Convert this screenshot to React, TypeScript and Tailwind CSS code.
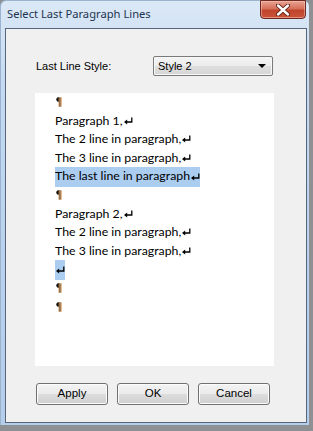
import React from "react";

const Pilcrow = () => (
  <svg width="6" height="10" viewBox="0 0 6 10" className="block">
    <path d="M0.3 2.4 C0.3 0.9 1.4 0.3 3 0.3 L3 4.7 C1.4 4.7 0.3 3.9 0.3 2.4 Z" fill="#111" />
    <rect x="2.6" y="0.3" width="1" height="9.4" fill="#c8781e" />
    <rect x="3.6" y="0.3" width="0.9" height="9.4" fill="#1a1a2a" />
    <rect x="4.5" y="0.3" width="1" height="9.4" fill="#c8781e" />
  </svg>
);

const Ret = () => (
  <svg width="9" height="8" viewBox="0 0 9 8" className="inline-block ml-[1px]">
    <path d="M7.8 0.5 V5 H2.5" stroke="#000" strokeWidth="1.3" fill="none" />
    <polygon points="0,5 3.2,2.4 3.2,7.6" fill="#000" />
  </svg>
);

type Line = { text?: string; ret?: boolean; pil?: boolean; hl?: boolean };

const lines: Line[] = [
  { pil: true },
  { text: "Paragraph 1,", ret: true },
  { text: "The 2 line in paragraph,", ret: true },
  { text: "The 3 line in paragraph,", ret: true },
  { text: "The last line in paragraph", ret: true, hl: true },
  { pil: true },
  { text: "Paragraph 2,", ret: true },
  { text: "The 2 line in paragraph,", ret: true },
  { text: "The 3 line in paragraph,", ret: true },
  { ret: true, hl: true },
  { pil: true },
  { pil: true },
];

const Btn = ({ label }: { label: string }) => (
  <div className="w-[72px] h-[22px] rounded-[3px] border border-[#707070] flex items-center justify-center text-[11.5px] text-black bg-[linear-gradient(to_bottom,#f3f3f3_0%,#ebebeb_48%,#dddddd_52%,#cfcfcf_100%)] shadow-[inset_0_0_0_1px_#fcfcfc]">
    {label}
  </div>
);

export default function App() {
  return (
    <div className="w-[313px] h-[431px] bg-[#8e9093] flex flex-col" style={{ fontFamily: '"Liberation Sans", Arial, sans-serif' }}>
      <div className="flex">
        <div className="w-[309px] h-[425px] flex flex-col rounded-t-[6px] bg-[linear-gradient(to_bottom,#dbe8f6_0%,#c4daf2_20%,#b9d1ee_60%,#b3cdea_100%)] border-l border-t border-[#9bb3cf]">
          <div className="h-[27px] flex items-start justify-between">
            <div
              className="pl-[6px] pt-[5px] text-[11.2px] text-[#1e3450]"
              style={{ fontFamily: '"Noto Sans", sans-serif' }}
            >
              Select Last Paragraph Lines
            </div>
            <div className="mr-[3px] -mt-[1px] w-[46px] h-[19px] rounded-b-[4px] border border-[#6a2a20] flex items-center justify-center bg-[linear-gradient(to_bottom,#e8a493_0%,#d5705a_45%,#c0432b_55%,#c9553a_100%)] shadow-[inset_0_0_0_1px_rgba(255,200,190,0.5)]">
              <svg width="14" height="12" viewBox="0 0 14 12">
                <path d="M2 1.5 L12 10.5 M12 1.5 L2 10.5" stroke="#5a1a10" strokeWidth="4.2" strokeLinecap="round" />
                <path d="M2 1.5 L12 10.5 M12 1.5 L2 10.5" stroke="#ffffff" strokeWidth="2.4" strokeLinecap="round" />
              </svg>
            </div>
          </div>
          <div className="ml-[4px] mr-[2px] h-[395px] border border-[#56657a] bg-[#f0f0f0] flex flex-col">
            <div className="h-[27px]" />
            <div className="flex items-center h-[20px]">
              <div className="ml-[30px] w-[117px] text-[11px] text-black">Last Line Style:</div>
              <div className="w-[120px] h-[20px] rounded-[2px] border border-[#7a7a7a] flex items-center justify-between bg-[linear-gradient(to_bottom,#f4f4f4_0%,#ececec_50%,#dedede_52%,#d6d6d6_100%)] shadow-[inset_0_0_0_1px_#f8f8f8]">
                <span className="pl-[4px] text-[11px] text-black">Style 2</span>
                <svg width="8" height="4" viewBox="0 0 8 4" className="mr-[6px]">
                  <polygon points="0,0 8,0 4,4" fill="#000" />
                </svg>
              </div>
            </div>
            <div className="h-[17px]" />
            <div
              className="ml-[29px] w-[239px] h-[273px] bg-white pl-[20px] flex flex-col"
              style={{ fontFamily: "Lato, sans-serif" }}
            >
              {lines.map((l, i) => (
                <div key={i} className="h-[18.6px] flex items-center">
                  {l.pil ? (
                    <div className="pl-[1px]">
                      <Pilcrow />
                    </div>
                  ) : (
                    <span className={`flex items-center h-[20px] text-[12.3px] text-black ${l.hl ? "bg-[#abcdf0]" : ""}`}>
                      {l.text && <span>{l.text}</span>}
                      {l.ret && <Ret />}
                    </span>
                  )}
                </div>
              ))}
            </div>
            <div className="h-[17px]" />
            <div className="ml-[30px] flex gap-[9px]">
              <Btn label="Apply" />
              <Btn label="OK" />
              <Btn label="Cancel" />
            </div>
          </div>
        </div>
      </div>
    </div>
  );
}
